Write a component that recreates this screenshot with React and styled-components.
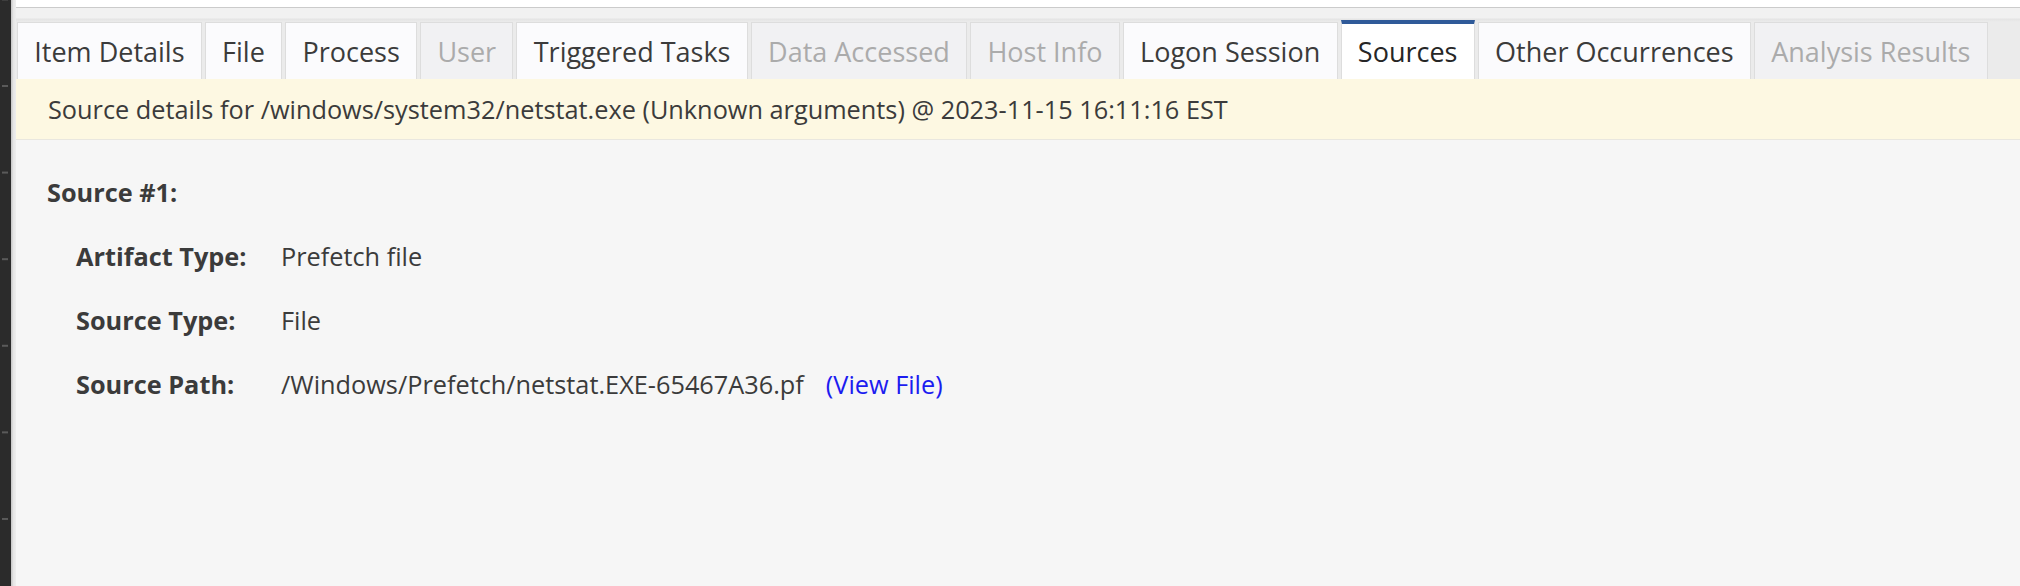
import React from 'react';
import styled, { createGlobalStyle, css } from 'styled-components';

const FONT = `'Open Sans', 'Noto Sans', sans-serif`;
const TAB_FS = 27;
const BODY_FS = 25.3;

const GlobalStyle = createGlobalStyle`
  html, body { margin: 0; padding: 0; }
  body {
    width: 2020px;
    height: 586px;
    overflow: hidden;
    font-family: ${FONT};
    background: #f6f6f6;
  }
  #root { height: 586px; }
`;

const Frame = styled.div`
  display: flex;
  height: 586px;
`;

const SideRail = styled.div`
  flex: none;
  width: 11px;
  background-color: #2b2b2b;
  background-image: linear-gradient(to bottom, #5a5a5a 0 2px, transparent 2px);
  background-size: 6px 86.6px;
  background-repeat: repeat-y;
  background-position: 2px -1.6px;
`;

const RailEdge = styled.div`
  flex: none;
  width: 5px;
  background: linear-gradient(to right, #c4c4c4, #e6e6e6 50%, #eeeeee);
`;

const Main = styled.div`
  flex: 1;
  display: flex;
  flex-direction: column;
  min-width: 0;
`;

const TopEdge = styled.div`
  height: 7px;
  background: #ffffff;
  border-bottom: 1px solid #cbcbcb;
`;

const TabStrip = styled.div`
  display: flex;
  align-items: flex-end;
  height: 71px;
  box-sizing: border-box;
  padding-left: 1px;
  background: linear-gradient(to bottom, #f1f1f1 0, #f1f1f1 10px, #e4e4e4 11px, #ebebeb 14px, #ebebeb 100%);
`;

const Tab = styled.div`
  flex: none;
  box-sizing: border-box;
  height: 57px;
  display: flex;
  align-items: center;
  padding: 0 16.3px;
  margin-right: 3px;
  font-size: ${TAB_FS}px;
  color: #3b3b3b;
  background: #fbfbfd;
  border: 1px solid #dddddd;
  border-bottom: none;
  white-space: nowrap;
  ${(p) =>
    p.$disabled &&
    css`
      color: #ababab;
      background: #f1f1f3;
    `}
  ${(p) =>
    p.$active &&
    css`
      height: 59px;
      color: #262626;
      background: #ffffff;
      border-top: 4px solid #2f5a99;
    `}
`;

const Banner = styled.div`
  height: 61px;
  box-sizing: border-box;
  display: flex;
  align-items: center;
  padding-left: 32px;
  background: #fdf8e2;
  border-bottom: 1px solid #e9e7df;
  font-size: ${BODY_FS}px;
  color: #3b3b3b;
  white-space: nowrap;
`;

const Content = styled.div`
  flex: 1;
  padding: 20px 31px 0;
  background: #f6f6f6;
  color: #3b3b3b;
  font-size: ${BODY_FS}px;
`;

const Heading = styled.div`
  height: 64px;
  display: flex;
  align-items: center;
  font-weight: 700;
`;

const Row = styled.div`
  height: 64px;
  display: grid;
  grid-template-columns: 205px auto;
  align-items: center;
  padding-left: 29px;
`;

const Label = styled.div`
  font-weight: 700;
`;

const Value = styled.div`
  display: flex;
  align-items: center;
  white-space: nowrap;
`;

const Link = styled.a`
  margin-left: 22px;
  color: #1c1cf0;
  text-decoration: none;
  cursor: pointer;
`;

const tabs = [
  { label: 'Item Details' },
  { label: 'File' },
  { label: 'Process' },
  { label: 'User', disabled: true },
  { label: 'Triggered Tasks' },
  { label: 'Data Accessed', disabled: true },
  { label: 'Host Info', disabled: true },
  { label: 'Logon Session' },
  { label: 'Sources', active: true },
  { label: 'Other Occurrences' },
  { label: 'Analysis Results', disabled: true },
];

const rows = [
  { label: 'Artifact Type:', value: 'Prefetch file' },
  { label: 'Source Type:', value: 'File' },
  { label: 'Source Path:', value: '/Windows/Prefetch/netstat.EXE-65467A36.pf', link: '(View File)' },
];

const BANNER = 'Source details for /windows/system32/netstat.exe (Unknown arguments) @ 2023-11-15 16:11:16 EST';

export default function App() {
  return (
    <>
      <GlobalStyle />
      <Frame>
        <SideRail />
        <RailEdge />
        <Main>
          <TopEdge />
          <TabStrip>
            {tabs.map((t) => (
              <Tab key={t.label} $disabled={t.disabled} $active={t.active}>
                {t.label}
              </Tab>
            ))}
          </TabStrip>
          <Banner>{BANNER}</Banner>
          <Content>
            <Heading>Source #1:</Heading>
            {rows.map((r) => (
              <Row key={r.label}>
                <Label>{r.label}</Label>
                <Value>
                  {r.value}
                  {r.link && <Link>{r.link}</Link>}
                </Value>
              </Row>
            ))}
          </Content>
        </Main>
      </Frame>
    </>
  );
}
